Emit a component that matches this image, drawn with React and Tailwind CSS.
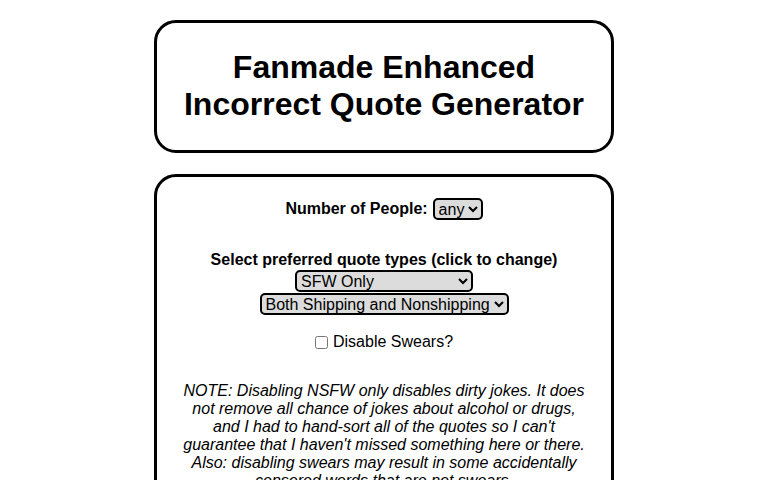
export default function App() {
  return (
    <div className="min-h-screen bg-white text-black pt-[20px] pb-10" style={{ fontFamily: '"Liberation Sans", Arial, sans-serif' }}>
      <div className="w-[460px] mx-auto border-[3px] border-black rounded-[22px] px-4 pt-[26px] pb-[27px] text-center">
        <h1 className="text-[32px] font-bold leading-[37px]">
          Fanmade Enhanced
          <br />
          Incorrect Quote Generator
        </h1>
      </div>

      <div className="w-[460px] mx-auto mt-[21px] border-[3px] border-black rounded-[22px] px-[21px] pt-[21px] pb-6 text-center text-[16px]">
        <div className="flex items-center justify-center gap-[5px] h-[22px]">
          <span className="font-bold">Number of People:</span>
          <select className="bg-[#dcdcdc] border-2 border-black rounded-[5px] h-[22px] text-[16px]">
            <option>any</option>
            <option>1</option>
            <option>2</option>
            <option>3</option>
          </select>
        </div>

        <div className="mt-[31px] font-bold leading-[18px]">Select preferred quote types (click to change)</div>
        <div className="flex flex-col items-center gap-[1px] mt-[1px]">
          <select className="w-[178px] bg-[#dcdcdc] border-2 border-black rounded-[5px] h-[22px] text-[16px]">
            <option>SFW Only</option>
            <option>NSFW Only</option>
            <option>Both SFW and NSFW</option>
          </select>
          <select className="bg-[#dcdcdc] border-2 border-black rounded-[5px] h-[22px] text-[16px]">
            <option>Both Shipping and Nonshipping</option>
            <option>Shipping Only</option>
            <option>Nonshipping Only</option>
          </select>
        </div>

        <label className="flex items-center justify-center mt-[18px] leading-[18px]">
          <input type="checkbox" className="w-[13px] h-[13px] mr-[5px]" />
          <span>Disable Swears?</span>
        </label>

        <p className="italic mt-[31px] leading-[18px]">
          NOTE: Disabling NSFW only disables dirty jokes. It does not remove all chance of jokes about alcohol or drugs, and I had to hand-sort all of the quotes so I can't guarantee that I haven't missed something here or there. Also: disabling swears may result in some accidentally censored words that are not swears.
        </p>
      </div>
    </div>
  );
}
